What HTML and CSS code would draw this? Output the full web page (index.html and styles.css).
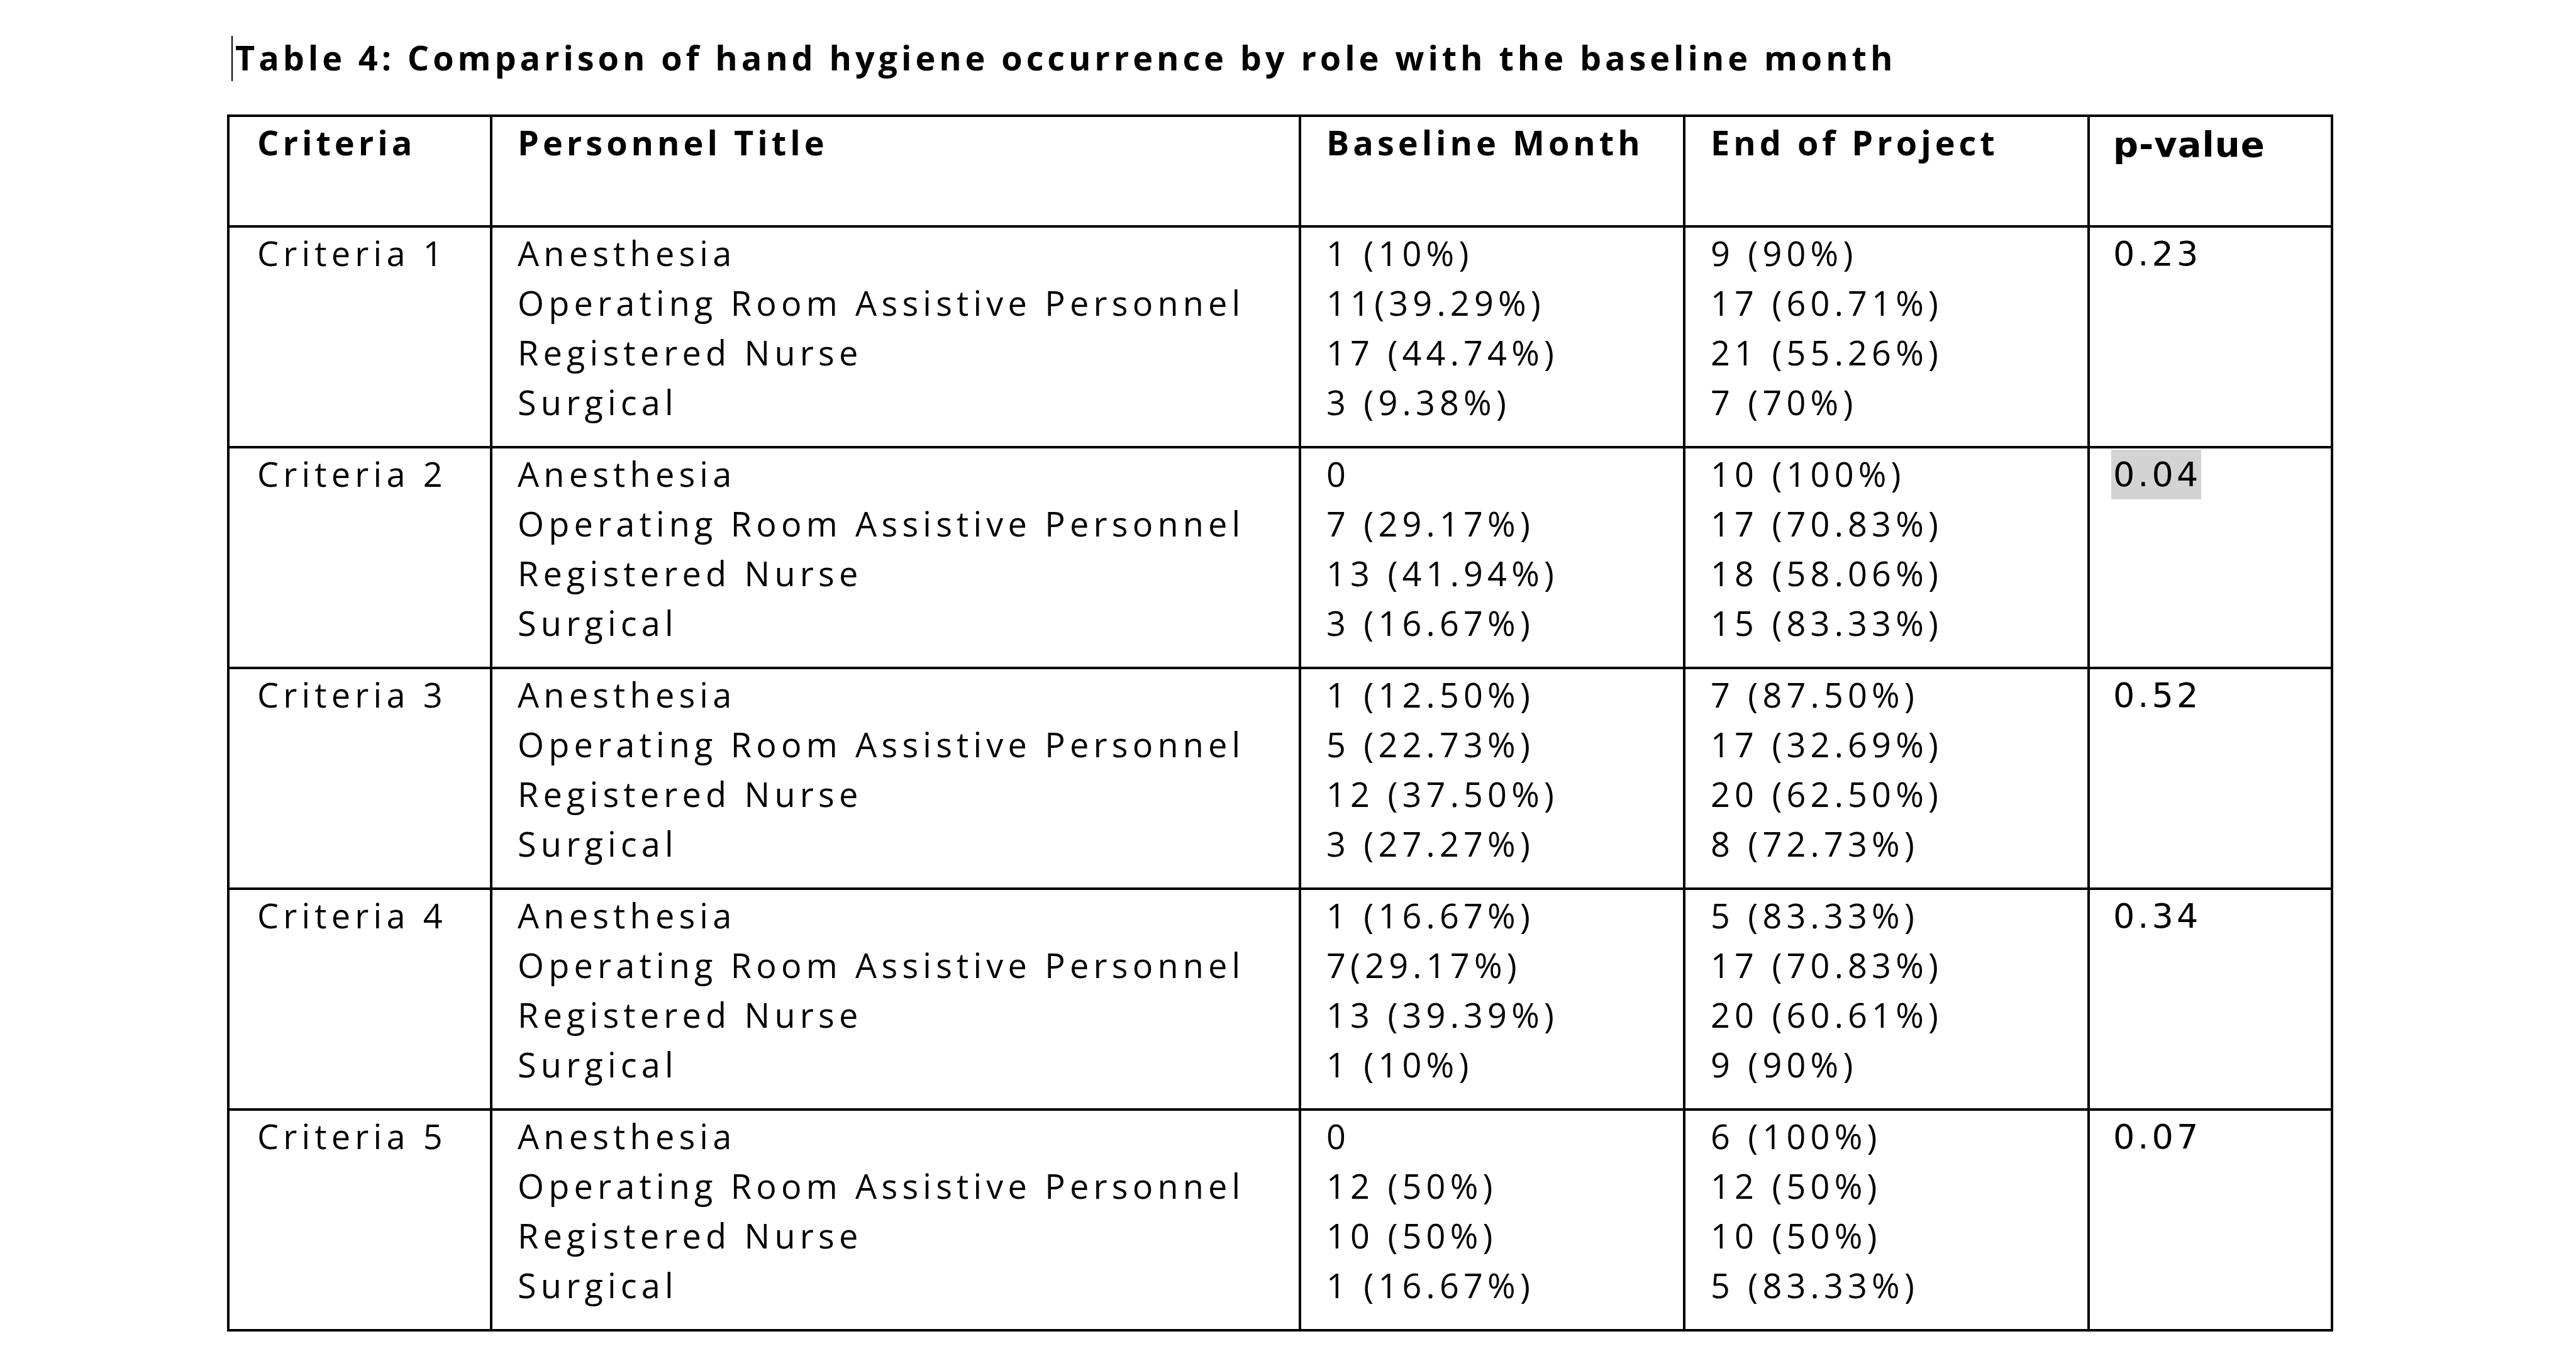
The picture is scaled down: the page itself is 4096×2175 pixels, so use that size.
FILE: index.html
```html
<!DOCTYPE html>
<html lang="en">
<head>
<meta charset="utf-8">
<title>Table 4</title>
<link rel="stylesheet" href="styles.css">
</head>
<body>
<main class="page">
  <p class="caption"><span class="cursor"></span>Table 4: Comparison of hand hygiene occurrence by role with the baseline month</p>
  <div class="sheet" role="table">
    <div class="cell head crit" role="columnheader">Criteria</div>
    <div class="cell head" role="columnheader">Personnel Title</div>
    <div class="cell head" role="columnheader">Baseline Month</div>
    <div class="cell head" role="columnheader">End of Project</div>
    <div class="cell head pv" role="columnheader">p-value</div>

    <div class="cell crit" role="cell">Criteria 1</div>
    <div class="cell" role="cell"><div>Anesthesia</div><div>Operating Room Assistive Personnel</div><div>Registered Nurse</div><div>Surgical</div></div>
    <div class="cell" role="cell"><div>1 (10%)</div><div>11(39.29%)</div><div>17 (44.74%)</div><div>3 (9.38%)</div></div>
    <div class="cell" role="cell"><div>9 (90%)</div><div>17 (60.71%)</div><div>21 (55.26%)</div><div>7 (70%)</div></div>
    <div class="cell pv" role="cell">0.23</div>

    <div class="cell crit" role="cell">Criteria 2</div>
    <div class="cell" role="cell"><div>Anesthesia</div><div>Operating Room Assistive Personnel</div><div>Registered Nurse</div><div>Surgical</div></div>
    <div class="cell" role="cell"><div>0</div><div>7 (29.17%)</div><div>13 (41.94%)</div><div>3 (16.67%)</div></div>
    <div class="cell" role="cell"><div>10 (100%)</div><div>17 (70.83%)</div><div>18 (58.06%)</div><div>15 (83.33%)</div></div>
    <div class="cell pv" role="cell"><span class="mark">0.04</span></div>

    <div class="cell crit" role="cell">Criteria 3</div>
    <div class="cell" role="cell"><div>Anesthesia</div><div>Operating Room Assistive Personnel</div><div>Registered Nurse</div><div>Surgical</div></div>
    <div class="cell" role="cell"><div>1 (12.50%)</div><div>5 (22.73%)</div><div>12 (37.50%)</div><div>3 (27.27%)</div></div>
    <div class="cell" role="cell"><div>7 (87.50%)</div><div>17 (32.69%)</div><div>20 (62.50%)</div><div>8 (72.73%)</div></div>
    <div class="cell pv" role="cell">0.52</div>

    <div class="cell crit" role="cell">Criteria 4</div>
    <div class="cell" role="cell"><div>Anesthesia</div><div>Operating Room Assistive Personnel</div><div>Registered Nurse</div><div>Surgical</div></div>
    <div class="cell" role="cell"><div>1 (16.67%)</div><div>7(29.17%)</div><div>13 (39.39%)</div><div>1 (10%)</div></div>
    <div class="cell" role="cell"><div>5 (83.33%)</div><div>17 (70.83%)</div><div>20 (60.61%)</div><div>9 (90%)</div></div>
    <div class="cell pv" role="cell">0.34</div>

    <div class="cell crit" role="cell">Criteria 5</div>
    <div class="cell" role="cell"><div>Anesthesia</div><div>Operating Room Assistive Personnel</div><div>Registered Nurse</div><div>Surgical</div></div>
    <div class="cell" role="cell"><div>0</div><div>12 (50%)</div><div>10 (50%)</div><div>1 (16.67%)</div></div>
    <div class="cell" role="cell"><div>6 (100%)</div><div>12 (50%)</div><div>10 (50%)</div><div>5 (83.33%)</div></div>
    <div class="cell pv" role="cell">0.07</div>
  </div>
</main>
</body>
</html>
```

FILE: styles.css
```css
html, body {
  margin: 0;
  padding: 0;
  background: #ffffff;
}

.page {
  padding-left: 361px;
  color: #000000;
  font-family: "Open Sans", "Liberation Sans", sans-serif;
}

.caption {
  margin: 0;
  padding: 52px 0 0 7px;
  font-size: 54px;
  line-height: 79px;
  font-weight: 700;
  letter-spacing: 5.9px;
  white-space: nowrap;
}

.cursor {
  display: inline-block;
  width: 2px;
  height: 72px;
  margin-right: 4px;
  background: #000000;
  vertical-align: -17px;
}

.sheet {
  margin-top: 51px;
  display: grid;
  grid-template-columns: 414px 1282px 607px 639px 383px;
  grid-template-rows: 172px repeat(5, 347px);
  gap: 4px;
  padding: 4px;
  background: #000000;
  width: max-content;
}

.cell {
  background: #ffffff;
  padding: 1px 0 0 40px;
  font-size: 54px;
  line-height: 79px;
  letter-spacing: 7.2px;
  white-space: nowrap;
  overflow: hidden;
}

.cell.crit {
  padding-left: 44px;
}

.cell.head {
  font-weight: 700;
  letter-spacing: 6px;
  padding-top: 1px;
}

.cell.pv {
  font-family: "DejaVu Sans", "Liberation Sans", sans-serif;
  padding-left: 37px;
  padding-top: 2px;
  letter-spacing: 5px;
}

.cell.head.pv {
  font-size: 56px;
  letter-spacing: 1px;
  padding-top: 4px;
}

.mark {
  display: inline-block;
  background: #d3d3d3;
  padding: 0 0 0 3px;
  margin-left: -3px;
}
```
